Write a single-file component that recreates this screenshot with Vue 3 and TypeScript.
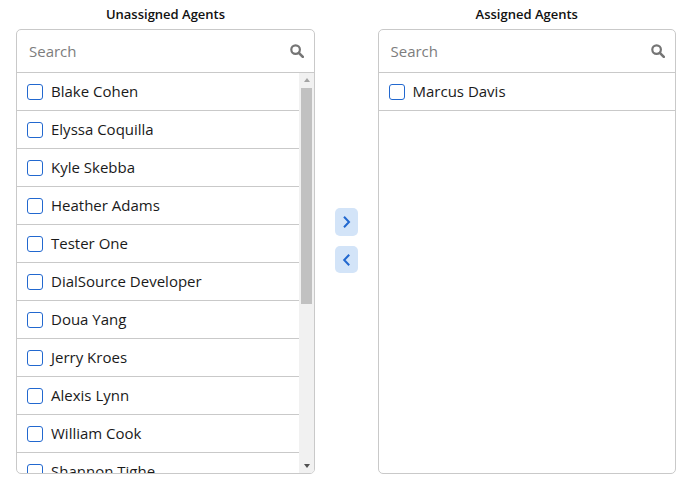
<template>
  <div class="page">
    <section class="column">
      <h2 class="title">Unassigned Agents</h2>
      <div class="panel">
        <div class="search">
          <span class="placeholder">Search</span>
          <svg class="search-icon" viewBox="0 0 14 14" width="14" height="14">
            <circle cx="5.6" cy="5.6" r="4.3" fill="none" stroke="#757575" stroke-width="2.2" />
            <path d="M8.8 8.8 L12.8 12.8" stroke="#757575" stroke-width="2.6" stroke-linecap="round" />
          </svg>
        </div>
        <div class="body">
          <ul class="list">
            <li v-for="agent in unassigned" :key="agent" class="row">
              <span class="check"></span>
              <span class="name">{{ agent }}</span>
            </li>
          </ul>
          <div class="scrollbar">
            <span class="arrow up"></span>
            <div class="track"><div class="thumb"></div></div>
            <span class="arrow down"></span>
          </div>
        </div>
      </div>
    </section>

    <div class="actions">
      <button class="move">
        <svg viewBox="0 0 10 14" width="10" height="14">
          <path d="M3 1.8 L8 7 L3 12.2" fill="none" stroke="#2268cf" stroke-width="2" />
        </svg>
      </button>
      <button class="move">
        <svg viewBox="0 0 10 14" width="10" height="14">
          <path d="M8.2 1.8 L3.2 7 L8.2 12.2" fill="none" stroke="#2268cf" stroke-width="2" />
        </svg>
      </button>
    </div>

    <section class="column">
      <h2 class="title">Assigned Agents</h2>
      <div class="panel">
        <div class="search">
          <span class="placeholder">Search</span>
          <svg class="search-icon" viewBox="0 0 14 14" width="14" height="14">
            <circle cx="5.6" cy="5.6" r="4.3" fill="none" stroke="#757575" stroke-width="2.2" />
            <path d="M8.8 8.8 L12.8 12.8" stroke="#757575" stroke-width="2.6" stroke-linecap="round" />
          </svg>
        </div>
        <div class="body">
          <ul class="list">
            <li v-for="agent in assigned" :key="agent" class="row">
              <span class="check"></span>
              <span class="name">{{ agent }}</span>
            </li>
          </ul>
        </div>
      </div>
    </section>
  </div>
</template>

<script setup lang="ts">
const unassigned: string[] = [
  'Blake Cohen',
  'Elyssa Coquilla',
  'Kyle Skebba',
  'Heather Adams',
  'Tester One',
  'DialSource Developer',
  'Doua Yang',
  'Jerry Kroes',
  'Alexis Lynn',
  'William Cook',
  'Shannon Tighe'
];

const assigned: string[] = ['Marcus Davis'];
</script>

<style>
html,
body {
  margin: 0;
  background: #fff;
}
</style>

<style scoped>
.page {
  display: grid;
  grid-template-columns: 299px 62.5px 298.5px;
  height: 492px;
  box-sizing: border-box;
  padding: 6px 0 18px 16px;
  font-family: "Open Sans", sans-serif;
  color: #1a1a1a;
}

.column {
  display: flex;
  flex-direction: column;
  min-height: 0;
}

.title {
  margin: 0;
  height: 23px;
  line-height: 17px;
  font-size: 13px;
  font-weight: 600;
  text-align: center;
  color: #111;
}

.panel {
  flex: 1;
  min-height: 0;
  display: flex;
  flex-direction: column;
  box-sizing: border-box;
  border: 1px solid #c9c9c9;
  border-radius: 5px;
  overflow: hidden;
}

.search {
  display: flex;
  align-items: center;
  justify-content: space-between;
  height: 43px;
  flex: none;
  box-sizing: border-box;
  padding: 0 10px 0 12px;
  border-bottom: 1px solid #c9c9c9;
}

.placeholder {
  font-size: 15px;
  color: #7d7d7d;
}

.search-icon {
  display: block;
}

.body {
  flex: 1;
  min-height: 0;
  display: flex;
}

.list {
  flex: 1;
  min-width: 0;
  margin: 0;
  padding: 0;
  list-style: none;
  overflow: hidden;
}

.row {
  display: flex;
  align-items: center;
  gap: 8px;
  height: 38px;
  box-sizing: border-box;
  padding-left: 10px;
  border-bottom: 1px solid #c9c9c9;
}

.check {
  flex: none;
  width: 16px;
  height: 16px;
  box-sizing: border-box;
  border: 1px solid #2268cf;
  border-radius: 3px;
  background: #fff;
}

.name {
  font-size: 15px;
  line-height: 20px;
  margin-bottom: 2px;
}

.scrollbar {
  flex: none;
  width: 15px;
  display: flex;
  flex-direction: column;
  align-items: center;
  background: #f1f1f1;
}

.arrow {
  flex: none;
  width: 0;
  height: 0;
  border-left: 3.5px solid transparent;
  border-right: 3.5px solid transparent;
}

.arrow.up {
  margin: 5px 0 6px;
  border-bottom: 4px solid #a3a3a3;
}

.arrow.down {
  margin: 5px 0 5px;
  border-top: 4px solid #505050;
}

.track {
  flex: 1;
  width: 100%;
  min-height: 0;
}

.thumb {
  width: 11px;
  margin: 0 auto;
  height: 216px;
  background: #c1c1c1;
}

.actions {
  display: flex;
  flex-direction: column;
  align-items: center;
  gap: 10px;
  padding-top: 202px;
}

.move {
  width: 23px;
  height: 28px;
  padding: 0;
  display: flex;
  align-items: center;
  justify-content: center;
  border: none;
  border-radius: 5px;
  background: #d3e4f8;
}

.move + .move {
  height: 27px;
}
</style>
